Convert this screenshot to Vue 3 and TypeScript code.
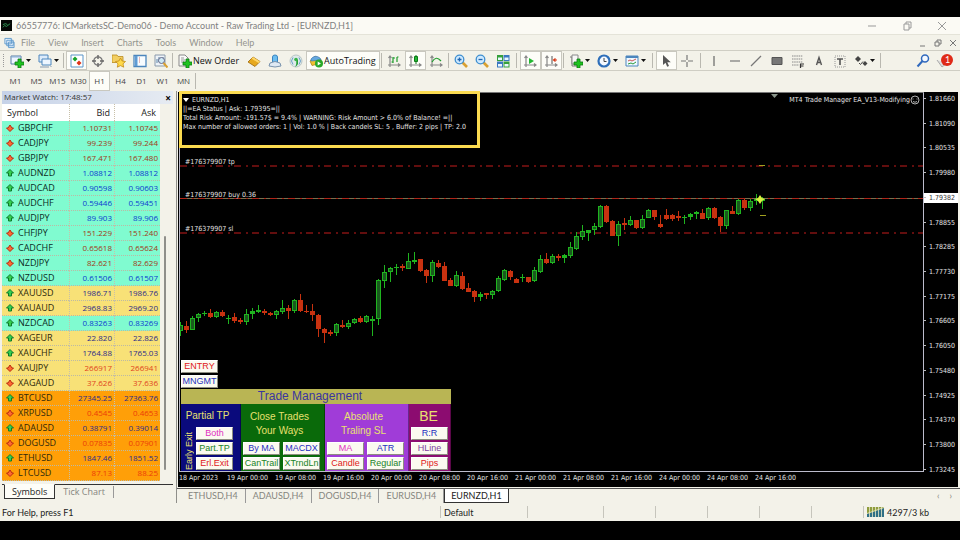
<script setup lang="ts">
interface Quote { symbol: string; bid: string; ask: string; up: boolean; group: 'mint' | 'gold' | 'orange' }
interface Tool { kind: 'btn' | 'drop' | 'sep' | 'text'; icon?: string; label?: string; active?: boolean; wide?: boolean }
type Candle = [string, number, number, number, number]

const menus = ['File', 'View', 'Insert', 'Charts', 'Tools', 'Window', 'Help']
const frames = ['M1', 'M5', 'M15', 'M30', 'H1', 'H4', 'D1', 'W1', 'MN']

const q = (row: string): Quote => {
  const [symbol, bid, ask, dir, group] = row.split(' ')
  return { symbol, bid, ask, up: dir === 'u', group: group as Quote['group'] }
}
const quotes: Quote[] = [
  'GBPCHF 1.10731 1.10745 d mint', 'CADJPY 99.239 99.244 d mint', 'GBPJPY 167.471 167.480 d mint',
  'AUDNZD 1.08812 1.08812 u mint', 'AUDCAD 0.90598 0.90603 u mint', 'AUDCHF 0.59446 0.59451 u mint',
  'AUDJPY 89.903 89.906 u mint', 'CHFJPY 151.229 151.240 d mint', 'CADCHF 0.65618 0.65624 d mint',
  'NZDJPY 82.621 82.629 d mint', 'NZDUSD 0.61506 0.61507 u mint', 'XAUUSD 1986.71 1986.76 u gold',
  'XAUAUD 2968.83 2969.20 u gold', 'NZDCAD 0.83263 0.83269 u mint', 'XAGEUR 22.820 22.826 u gold',
  'XAUCHF 1764.88 1765.03 u gold', 'XAUJPY 266917 266941 d gold', 'XAGAUD 37.626 37.636 d gold',
  'BTCUSD 27345.25 27363.76 u orange', 'XRPUSD 0.4545 0.4653 d orange', 'ADAUSD 0.38791 0.39014 u orange',
  'DOGUSD 0.07835 0.07901 d orange', 'ETHUSD 1847.46 1851.52 u orange', 'LTCUSD 87.13 88.25 d orange',
].map(q)

const plus = '<path d="M8 5h3v3h3v3h-3v3h-3v-3h-3v-3h3z" fill="#1fc31f" stroke="#0b7a12" stroke-width=".8"/>'
const axes = '<path d="M3 2v11M1 11h12M1.500 4l1.500-2 1.500 2M11 9.500l2 1.500-2 1.500" fill="none" stroke="#888" stroke-width="1.200"/>'
const mag = (sign: string) =>
  `<path d="M8.500 8.500l4.500 4.500" stroke="#d9a030" stroke-width="2.600"/><circle cx="5.500" cy="5.500" r="4.300" fill="#cfeaff" stroke="#3f8fd0" stroke-width="1.300"/><path d="${sign}" stroke="#2266b0" stroke-width="1.300"/>`
const icons: Record<string, string> = {
  newChart: '<path d="M1 2h10v8h-10z" fill="#eef6ff" stroke="#5a7fa5"/><path d="M1 3h10" stroke="#8ab0d8"/>' + plus,
  profiles: '<path d="M1 1h9v7h-9z" fill="#dcebfb" stroke="#4c86bd"/><path d="M4 5h9v6h-9z" fill="#eef6ff" stroke="#4c86bd"/><path d="M2 13h9M13 12v1" stroke="#8a9ab0"/>',
  watch: '<path d="M1 1h12v12h-12z" fill="#fff" stroke="#5b95c9"/><path d="M5 2.500l2.500 2.500-2.500 2.500-2.500-2.500z" fill="#16a32a"/><path d="M9 6.500l2.500 2.500-2.500 2.500-2.500-2.500z" fill="#e03418"/>',
  target: '<circle cx="7" cy="7" r="4.200" fill="none" stroke="#777" stroke-width="1.200"/><path d="M7 1v4M7 9v4M1 7h4M9 7h4" stroke="#666" stroke-width="1.400"/>',
  star: '<path d="M0 1h5l1 1.500h5v6h-11z" fill="#f3cf62" stroke="#b98a20" stroke-width=".8"/><path d="M8.500 4l1.600 3 3.400.5-2.500 2.300.7 3.400-3.200-1.600-3.200 1.600.7-3.400-2.500-2.300 3.400-.5z" fill="#ffd94a" stroke="#c08a18" stroke-width=".8"/>',
  nav: '<path d="M1 1.500h12v11h-12z" fill="#f8fcff" stroke="#4c86bd" stroke-width="1.300"/><path d="M2 2h2.500v10h-2.500z" fill="#5e9bd4"/><path d="M6 4h.8M6 6h.8M6 8h.8" stroke="#c55"/>',
  tester: '<path d="M1 1h10v11h-10z" fill="#eef3f8" stroke="#8a9aab"/><path d="M3 9v-4M5 8v-5M9 6v-3" stroke="#5a86a8"/><circle cx="7.500" cy="6.500" r="3" fill="#cde9f5" stroke="#668"/><path d="M9.500 9l4 4.500" stroke="#d9a030" stroke-width="2"/>',
  order: '<path d="M1 1h6l3 3v8h-9z" fill="#fafafa" stroke="#888"/><path d="M3 4h3M3 6h4M3 8h3" stroke="#999"/>' + plus,
  gold: '<path d="M1 8l5-5 7 4.500-5 5z" fill="#e7a91e" stroke="#9a6608" stroke-width=".8"/><path d="M6 3l7 4.500-1.500 1.500-7-4.500z" fill="#ffd768"/>',
  hat: '<path d="M4.500 3q0-2 2.500-2t2.500 2v5h-5z" fill="#6cbdf0" stroke="#3a84c0"/><path d="M2 9q5-3 10 0l1 3q-6 2-12 0z" fill="#dfe9f3" stroke="#7a93ad"/>',
  signal: '<circle cx="7" cy="7" r="6" fill="#dfeaea" stroke="#b9c5c5"/><path d="M4 3.500q-3 3.500 0 7M10 3.500q3 3.500 0 7" fill="none" stroke="#6aa0c8"/><path d="M7 5l2 1v4q-1 2-3 3q2-3 1-8z" fill="#25a035"/><circle cx="7" cy="5.500" r="1.800" fill="#38b548"/>',
  auto: '<path d="M1 7l5-4.500 6 3-1 4-8 2z" fill="#f0c030" stroke="#a47a12" stroke-width=".7"/><path d="M2 5q4-5 9-1l1 2-10 1z" fill="#64a8e0" stroke="#3d76ad" stroke-width=".7"/><circle cx="10" cy="9.500" r="4" fill="#2aa82a"/><path d="M8.700 7.500v4l3.200-2z" fill="#fff"/>',
  bars: axes + '<path d="M6 9v-6M6 8h-1.500M6 4h2M10 8v-5M10 3h1.500" stroke="#1f9c2c" stroke-width="1.200" fill="none"/>',
  candle: axes + '<path d="M8 1v9" stroke="#0d7a18"/><path d="M6.500 2.500h3v5h-3z" fill="#22b832" stroke="#0d7a18"/>',
  line: axes + '<path d="M3 8q4-7 9-1" stroke="#1f9c2c" stroke-width="1.200" fill="none"/>',
  zoomIn: mag('M3.500 5.500h4M5.500 3.500v4'),
  zoomOut: mag('M3.500 5.500h4'),
  tile: '<path d="M1 1h6v6h-6z" fill="#35a03c"/><path d="M7.500 1h6v6h-6z" fill="#3a78c0"/><path d="M1 7.500h6v6h-6z" fill="#3a78c0"/><path d="M7.500 7.500h6v6h-6z" fill="#35a03c"/><path d="M2 3.500h4v2.500h-4zM8.500 3.500h4v2.500h-4zM2 10h4v2.500h-4zM8.500 10h4v2.500h-4z" fill="#e9f6ff"/>',
  scroll: axes + '<path d="M6 4v6l5-3z" fill="#22b832"/>',
  shift: axes + '<path d="M8 2v8" stroke="#555"/><path d="M13 6h-3M11.500 4.500l-2 1.500 2 1.500" stroke="#d83a18" stroke-width="1.200" fill="none"/>',
  indicator: '<path d="M1 3h2v9h5" fill="none" stroke="#777"/><path d="M3 1h6v9h-6z" fill="#f6f6f6" stroke="#888"/>' + plus,
  clock: '<circle cx="7" cy="7" r="5.500" fill="#f4f9ff" stroke="#2e6fba" stroke-width="2.200"/><path d="M7 4v3.500h2.500" fill="none" stroke="#444"/>',
  template: '<path d="M1 2h12v10h-12z" fill="#eef8ff" stroke="#4c86bd"/><path d="M1 3h12" stroke="#4c86bd" stroke-width="2"/><path d="M3 7l2-1 2 1 4-2" stroke="#c55" fill="none"/><path d="M3 10l3-1 2 1 3-2" stroke="#2a9a3a" fill="none"/>',
  cursor: '<path d="M4 1v10l2.500-2.300 1.700 4 1.800-.8-1.700-3.700h3.500z" fill="#555"/>',
  cross: '<path d="M7 1v5M7 8v5M1 7h5M8 7h5" stroke="#777" stroke-width="1.200"/>',
  vline: '<path d="M7 2v10" stroke="#666" stroke-width="1.200"/>',
  hline: '<path d="M2 7h10" stroke="#777" stroke-width="1.200"/>',
  trend: '<path d="M2 12l10-10" stroke="#777" stroke-width="1.200"/>',
  rect: '<path d="M2 3.500h10v7h-10z" fill="#777" stroke="#555"/>',
  fibo: '<path d="M1 2h11M1 5h11M1 8h11M1 11h7" stroke="#888" stroke-dasharray="1.500 .7"/><path d="M9 10h4M9.500 10v4M9.500 12h3" stroke="#333" stroke-width="1.200"/>',
  text: '<path d="M4.500 11l2.500-7.500 2.500 7.500M5 8.500h4" fill="none" stroke="#555" stroke-width="1.400"/>',
  label: '<path d="M2 2h10v11h-10z" fill="none" stroke="#999" stroke-dasharray="1 1"/><path d="M4 5h6M7 5v6" stroke="#555" stroke-width="1.600"/>',
  arrows: '<path d="M4 2l3 3-3 3-3-3z" fill="#444"/><path d="M5 9l1.500 1.500 2.500-3" fill="none" stroke="#444"/><path d="M11 7l2.500 2.500-2.500 2.500-2.500-2.500z" fill="#444"/>',
  find: '<circle cx="9" cy="4.500" r="3.500" fill="#f3f8ff" stroke="#2f68bd" stroke-width="1.500"/><path d="M6.500 7l-5 5.500" stroke="#2f68bd" stroke-width="2"/>',
}

const tools: Tool[] = [
  { kind: 'drop', icon: 'newChart', label: 'New chart' }, { kind: 'drop', icon: 'profiles', label: 'Profiles' }, { kind: 'sep' },
  { kind: 'btn', icon: 'watch', label: 'Market Watch', active: true }, { kind: 'btn', icon: 'target', label: 'Data Window' },
  { kind: 'btn', icon: 'star', label: 'Navigator' }, { kind: 'btn', icon: 'nav', label: 'Terminal' }, { kind: 'btn', icon: 'tester', label: 'Strategy Tester' }, { kind: 'sep' },
  { kind: 'text', icon: 'order', label: 'New Order' }, { kind: 'btn', icon: 'gold', label: 'MetaEditor' },
  { kind: 'btn', icon: 'hat', label: 'Community' }, { kind: 'btn', icon: 'signal', label: 'Signals' },
  { kind: 'text', icon: 'auto', label: 'AutoTrading', active: true }, { kind: 'sep' },
  { kind: 'btn', icon: 'bars', label: 'Bar chart' }, { kind: 'btn', icon: 'candle', label: 'Candlesticks', active: true }, { kind: 'btn', icon: 'line', label: 'Line chart' }, { kind: 'sep' },
  { kind: 'btn', icon: 'zoomIn', label: 'Zoom in' }, { kind: 'btn', icon: 'zoomOut', label: 'Zoom out' }, { kind: 'btn', icon: 'tile', label: 'Tile windows' }, { kind: 'sep', wide: true },
  { kind: 'btn', icon: 'scroll', label: 'Auto scroll', active: true }, { kind: 'btn', icon: 'shift', label: 'Chart shift', active: true }, { kind: 'sep' },
  { kind: 'drop', icon: 'indicator', label: 'Indicators' }, { kind: 'drop', icon: 'clock', label: 'Periods' }, { kind: 'drop', icon: 'template', label: 'Templates' }, { kind: 'sep', wide: true },
  { kind: 'btn', icon: 'cursor', label: 'Cursor', active: true }, { kind: 'btn', icon: 'cross', label: 'Crosshair' }, { kind: 'sep', wide: true },
  { kind: 'btn', icon: 'vline', label: 'Vertical line' }, { kind: 'btn', icon: 'hline', label: 'Horizontal line' }, { kind: 'btn', icon: 'trend', label: 'Trendline' },
  { kind: 'btn', icon: 'rect', label: 'Rectangle' }, { kind: 'btn', icon: 'fibo', label: 'Fibonacci' }, { kind: 'btn', icon: 'text', label: 'Text' }, { kind: 'btn', icon: 'label', label: 'Text label' },
  { kind: 'drop', icon: 'arrows', label: 'Arrows' }, { kind: 'sep' },
]

const prices = ['1.81660', '1.81090', '1.80535', '1.79980', '1.79382', '1.78855', '1.78285', '1.77730', '1.77175', '1.76605', '1.76050', '1.75480', '1.74925', '1.74370', '1.73800', '1.73245']
const times = ['18 Apr 2023', '19 Apr 00:00', '19 Apr 08:00', '19 Apr 16:00', '20 Apr 00:00', '20 Apr 08:00', '20 Apr 16:00', '21 Apr 00:00', '21 Apr 08:00', '21 Apr 16:00', '24 Apr 00:00', '24 Apr 08:00', '24 Apr 16:00']
const levels = [
  { name: '#176379907 tp', y: 166 },
  { name: '#176379907 sl', y: 233 },
]

// direction, high, body top, body bottom, low
const candles: Candle[] = [
  ['g', 322, 325, 331, 336], ['r', 321, 326, 330, 333], ['g', 316, 318, 330, 330], ['g', 313, 314, 318, 322], ['g', 311, 313, 314, 316],
  ['r', 309, 313, 317, 318], ['g', 311, 312, 317, 318], ['r', 310, 312, 316, 317], ['g', 315, 318, 319, 324], ['r', 313, 317, 321, 323],
  ['r', 318, 320, 322, 324], ['g', 309, 314, 322, 325], ['g', 308, 311, 314, 319], ['g', 305, 310, 312, 313], ['r', 309, 311, 313, 315],
  ['r', 312, 313, 315, 316], ['g', 310, 311, 315, 319], ['g', 300, 308, 312, 314], ['r', 305, 308, 311, 319], ['g', 299, 300, 311, 313],
  ['r', 294, 300, 311, 312], ['r', 305, 311, 312, 313], ['r', 304, 311, 315, 321], ['r', 314, 315, 329, 337], ['r', 328, 329, 333, 343],
  ['r', 330, 332, 334, 336], ['g', 323, 324, 333, 336], ['r', 320, 325, 327, 328], ['g', 320, 323, 327, 329], ['g', 318, 319, 323, 324],
  ['r', 316, 318, 322, 323], ['g', 315, 316, 322, 323], ['g', 316, 319, 321, 336], ['g', 279, 280, 319, 325], ['g', 265, 272, 281, 288],
  ['g', 267, 268, 272, 282], ['g', 264, 267, 268, 275], ['r', 264, 266, 268, 271], ['g', 253, 261, 269, 269], ['g', 252, 260, 262, 264],
  ['r', 259, 259, 271, 272], ['r', 269, 270, 276, 283], ['g', 260, 262, 276, 282], ['r', 260, 263, 267, 268], ['r', 262, 266, 281, 281],
  ['r', 278, 280, 286, 286], ['g', 271, 275, 286, 287], ['r', 272, 276, 289, 290], ['r', 283, 288, 292, 292], ['r', 290, 291, 297, 302],
  ['g', 292, 294, 297, 301], ['r', 293, 293, 295, 299], ['g', 290, 291, 295, 299], ['g', 276, 278, 291, 292], ['g', 269, 270, 280, 281],
  ['r', 270, 271, 277, 280], ['r', 278, 279, 283, 283], ['g', 274, 277, 278, 282], ['r', 277, 277, 282, 283], ['g', 267, 270, 281, 282],
  ['g', 255, 259, 272, 273], ['r', 253, 259, 263, 264], ['g', 254, 256, 263, 264], ['r', 254, 256, 258, 261], ['g', 254, 255, 258, 263],
  ['g', 242, 247, 256, 258], ['g', 232, 236, 249, 250], ['g', 225, 231, 237, 240], ['g', 230, 230, 233, 241], ['g', 223, 226, 230, 235],
  ['g', 205, 206, 227, 228], ['r', 205, 206, 222, 223], ['r', 220, 221, 236, 236], ['g', 221, 224, 236, 246], ['r', 218, 223, 225, 230],
  ['g', 216, 220, 225, 226], ['r', 220, 220, 228, 229], ['g', 215, 219, 228, 229], ['g', 209, 210, 218, 218], ['r', 210, 210, 217, 220],
  ['r', 215, 224, 227, 228], ['r', 209, 215, 219, 220], ['r', 214, 215, 219, 221], ['r', 211, 216, 218, 221], ['g', 215, 217, 218, 224],
  ['g', 213, 214, 217, 220], ['g', 211, 212, 214, 219], ['r', 209, 213, 219, 219], ['g', 207, 208, 218, 220], ['r', 207, 208, 218, 219],
  ['r', 216, 217, 226, 232], ['g', 210, 210, 226, 229], ['r', 206, 211, 214, 214], ['g', 199, 200, 214, 215], ['r', 199, 200, 208, 210],
  ['g', 199, 201, 208, 211], ['g', 194, 199, 201, 205], ['g', 197, 199, 201, 209],
]

const panels = [
  { id: 'partial', title: ['Partial TP'], buttons: [['Both', 'pink'], ['Part.TP', 'green'], ['Erl.Exit', 'red']] },
  { id: 'close', title: ['Close Trades', 'Your Ways'], buttons: [['By MA', 'blue'], ['MACDX', 'blue'], ['CanTrail', 'green'], ['XTrndLn', 'green']] },
  { id: 'absolute', title: ['Absolute', 'Traling SL'], buttons: [['MA', 'pink'], ['ATR', 'blue'], ['Candle', 'red'], ['Regular', 'green']] },
  { id: 'be', title: ['BE'], buttons: [['R:R', 'blue'], ['HLine', 'violet'], ['Pips', 'red']] },
]
const chartTabs = ['ETHUSD,H4', 'ADAUSD,H4', 'DOGUSD,H4', 'EURUSD,H4', 'EURNZD,H1']
</script>

<template>
  <div class="desk">
    <header class="title">
      <svg class="applogo" viewBox="0 0 12 12"><path d="M0 0h12v12h-12z" fill="#050805" /><path d="M2 8l2-2 2 1 4-3M2 5l3-1 2 1" stroke="#2f9c55" fill="none" /></svg>
      <span class="caption">66557776: ICMarketsSC-Demo06 - Demo Account - Raw Trading Ltd - [EURNZD,H1]</span>
      <div class="winbtns">
        <button aria-label="Minimize"><svg viewBox="0 0 10 10"><path d="M1 5h8" /></svg></button>
        <button aria-label="Restore"><svg viewBox="0 0 10 10"><path d="M2 3h5v6h-5zM4 3v-2h5v6h-2" /></svg></button>
        <button aria-label="Close"><svg viewBox="0 0 10 10"><path d="M1 1l8 8M9 1l-8 8" /></svg></button>
      </div>
    </header>

    <nav class="menu">
      <svg class="menulogo" viewBox="0 0 12 12"><path d="M1 1h7v6h-7zM3 3h7v6h-7zM5 5h6v6h-6z" fill="#e8f3ff" stroke="#5b97c9" /></svg>
      <button v-for="m in menus" :key="m">{{ m }}</button>
      <div class="mdi">
        <button aria-label="Minimize chart"><svg viewBox="0 0 8 8"><path d="M1 7h5" /></svg></button>
        <button aria-label="Restore chart"><svg viewBox="0 0 8 8"><path d="M1 3h4v4h-4zM3 3v-2h4v4h-2" /></svg></button>
        <button aria-label="Close chart"><svg viewBox="0 0 8 8"><path d="M1 1l6 6M7 1l-6 6" /></svg></button>
      </div>
    </nav>

    <div class="tools">
      <span class="grip"></span>
      <template v-for="(t, i) in tools" :key="i">
        <span v-if="t.kind === 'sep'" :class="['sep', { wide: t.wide }]"></span>
        <button v-else :class="['tool', t.kind, { active: t.active }]" :aria-label="t.label">
          <svg class="ico" viewBox="0 0 14 14" v-html="icons[t.icon!]"></svg>
          <span v-if="t.kind === 'text'">{{ t.label }}</span>
          <svg v-if="t.kind === 'drop'" class="caret" viewBox="0 0 5 3"><path d="M0 0h5l-2.500 3z" /></svg>
        </button>
      </template>
      <span class="fill"></span>
      <button class="tool btn" aria-label="Search"><svg class="ico" viewBox="0 0 14 14" v-html="icons.find"></svg></button>
      <button class="tool alert" aria-label="Notifications">
        <svg viewBox="0 0 18 16"><path d="M1 7l5 7 5-4" fill="#ddd" stroke="#aaa" /><circle cx="11" cy="7" r="6" fill="#df2a18" /></svg>
        <span class="count">1</span>
      </button>
    </div>

    <div class="frames">
      <button v-for="f in frames" :key="f" :class="{ on: f === 'H1' }">{{ f }}</button>
      <span class="sep"></span>
    </div>

    <main class="work">
      <aside class="watch">
        <div class="whead"><span>Market Watch: 17:48:57</span><button aria-label="Close panel">×</button></div>
        <div class="wbody">
          <table>
            <thead><tr><th class="s">Symbol</th><th>Bid</th><th>Ask</th></tr></thead>
            <tbody>
              <tr v-for="r in quotes" :key="r.symbol" :class="[r.group, r.up ? 'up' : 'down']">
                <td class="s">
                  <svg class="dir" viewBox="0 0 8 8">
                    <path v-if="r.up" d="M4 .5l3.500 3.500h-2v3h-3v-3h-2z" fill="#35cf50" stroke="#0d7a2a" />
                    <path v-else d="M4 7.500l3.500-3.500h-1.500l-2-3-2 3h-1.500z" fill="#ff6a30" stroke="#b82a10" />
                  </svg>{{ r.symbol }}
                </td>
                <td>{{ r.bid }}</td>
                <td>{{ r.ask }}</td>
              </tr>
            </tbody>
          </table>
          <div class="bar"><span class="thumb"></span></div>
        </div>
        <div class="wtabs"><button class="on">Symbols</button><button>Tick Chart</button></div>
      </aside>

      <section class="charts">
        <div class="chart">
          <div class="view">
            <svg class="plot" viewBox="180 93 743 378" preserveAspectRatio="none">
              <path v-for="l in levels" :key="l.name" :d="`M180 ${l.y}H923`" class="stop" />
              <path d="M180 198.500H923" class="entry" />
              <path d="M180 198.500H923" class="entrydash" />
              <text v-for="l in levels" :key="l.name" x="185" :y="l.y - 2">{{ l.name }}</text>
              <text x="185" y="197">#176379907 buy 0.36</text>
              <g v-for="(c, i) in candles" :key="i" :class="c[0]" shape-rendering="crispEdges">
                <rect :x="180 + i * 6" :y="c[1]" width="1" :height="c[4] - c[1]" />
                <rect :x="178 + i * 6" :y="c[2]" width="5" :height="Math.max(1, c[3] - c[2])" />
                <rect v-if="c[0] === 'g' && c[3] - c[2] > 3" class="core" :x="179 + i * 6" :y="c[2] + 1" width="3" :height="c[3] - c[2] - 2" />
              </g>
              <path d="M759 165.500h6M760 215.500h6" stroke="#a0a020" />
              <path d="M760 195l2 3 3 1-3 2-2 3-2-3-3-2 3-1z" fill="#d8f040" />
              <path d="M771 94h7l-3.500 4z" fill="#8b968b" />
            </svg>
            <div class="info">
              <p><svg class="tri" viewBox="0 0 6 4"><path d="M0 0h6l-3 4z" /></svg>EURNZD,H1</p>
              <p>||=EA Status | Ask: 1.79395=||</p>
              <p>Total Risk Amount: -191.57$ = 9.4% | WARNING: Risk Amount &gt; 6.0% of Balance! =||</p>
              <p>Max number of allowed orders: 1 | Vol: 1.0 % | Back candels SL: 5 , Buffer: 2 pips | TP: 2.0</p>
            </div>
            <div class="expert">MT4 Trade Manager EA_V13-Modifying<svg viewBox="0 0 10 10"><circle cx="5" cy="5" r="4" /><path d="M3 3.500v1M7 3.500v1M3 6.500q2 1.500 4 0" /></svg></div>
            <div class="ea">
              <div class="modes">
                <button class="red">ENTRY</button>
                <button class="blue">MNGMT</button>
              </div>
              <h2>Trade Management</h2>
              <div class="cols">
                <div v-for="p in panels" :key="p.id" :class="['col', p.id]">
                  <h3><span v-for="t in p.title" :key="t">{{ t }}</span></h3>
                  <div class="row">
                    <span v-if="p.id === 'partial'" class="early">Early Exit</span>
                    <div class="keys"><button v-for="b in p.buttons" :key="b[0]" :class="b[1]">{{ b[0] }}</button></div>
                  </div>
                </div>
              </div>
            </div>
          </div>
          <div class="prices"><span v-for="p in prices" :key="p" :class="{ now: p === '1.79382' }">{{ p }}</span></div>
          <div class="times"><span v-for="t in times" :key="t">{{ t }}</span></div>
        </div>
        <div class="ctabs">
          <button v-for="t in chartTabs" :key="t" :class="{ on: t === 'EURNZD,H1' }">{{ t }}</button>
          <span class="nav"><button aria-label="Previous tabs">‹</button><button aria-label="Next tabs">›</button></span>
        </div>
      </section>
    </main>

    <footer class="status">
      <span class="help">For Help, press F1</span>
      <span class="c1">Default</span><span class="c2"></span><span class="c3"></span><span class="c3"></span><span class="c3"></span><span class="c3"></span><span class="c3"></span>
      <span class="net">
        <svg viewBox="0 0 17 10"><path d="M0 0h17v10h-17z" fill="#8f9c3c" /><path d="M0 10v-3l17-6v9z" fill="#2f6f86" /><path d="M2.500 0v10M5.500 0v10M8.500 0v10M11.500 0v10M14.500 0v10M0 6.500l17-6" stroke="#e8e8c8" stroke-width=".8" /></svg>
        4297/3 kb
      </span>
    </footer>
  </div>
</template>

<style>
body { background: #000; }
</style>

<style scoped>
* { box-sizing: border-box; }
button { font: inherit; color: inherit; background: none; border: 0; padding: 0; margin: 0; white-space: nowrap; }
.desk {
  min-height: 100vh; padding: 17px 0 19px; display: flex; flex-direction: column;
  background: #000; color: #222; font: 9px/12px Lato, "Open Sans", sans-serif;
}
.desk > * { background: #f3f2e9; }
.title { display: flex; align-items: center; height: 18px; padding: 0 13px 0 1px; background: #fbfaf4; color: #808080; gap: 4px; border-bottom: 1px solid #e4e3d8; }
.applogo { width: 11px; height: 11px; }
.caption { flex: 1; white-space: nowrap; }
.winbtns { display: flex; gap: 25px; }
.winbtns svg { display: block; width: 10px; height: 10px; fill: none; stroke: #999; }
.menu { display: flex; align-items: center; height: 15px; padding: 0 3px 0 4px; gap: 13px; color: #94948e; }
.menulogo { width: 11px; height: 12px; margin-right: -7px; }
.mdi { display: flex; gap: 7px; margin-left: auto; }
.mdi svg { display: block; width: 8px; height: 8px; fill: none; stroke: #777; }
.tools { display: flex; align-items: stretch; height: 21px; padding: 0 3px 0 1px; border-top: 1px solid #cfcec4; border-bottom: 1px solid #cfcec4; }
.grip { width: 2px; margin: 3px 1px 3px 2px; border-left: 1px dotted #999; }
.sep { width: 1px; margin: 2px 2px 2px 1px; background: #b9b8b0; }
.sep.wide { margin-left: 2px; margin-right: 3px; }
.tool { display: flex; align-items: center; justify-content: center; width: 21px; height: 19px; border: 1px solid transparent; color: #111; }
.tool.active { background: #fdfdf8; border-color: #c9c8bf; }
.tool.drop { width: 28px; gap: 2px; }
.tool.text { width: auto; padding: 0 3px 0 2px; gap: 1px; font-family: "Open Sans", sans-serif; }
.ico { width: 14px; height: 14px; flex: none; }
.caret { width: 5px; height: 3px; fill: #111; }
.fill { flex: 1; }
.alert { position: relative; width: 24px; }
.alert svg { width: 18px; height: 16px; }
.count { position: absolute; left: 11px; top: 2px; color: #fff; }
.frames { display: flex; align-items: stretch; height: 20px; padding: 0 0 0 5px; font: 8px/12px "Open Sans", sans-serif; color: #444; }
.frames button { width: 21px; border: 1px solid transparent; }
.frames .on { background: #fdfdf8; border-color: #c9c8bf; }
.work { flex: 1; display: flex; align-items: stretch; }
.watch { width: 177px; flex: none; padding: 0 3px 4px 2px; border-right: 1px solid #8f8f8a; font-family: "Open Sans", sans-serif; }
.whead { display: flex; justify-content: space-between; height: 13px; padding: 0 2px; background: linear-gradient(90deg, #c6d2e8, #e6ebf2); color: #333; font-size: 8px; }
.whead button { color: #000; font-size: 10px; font-weight: 700; }
.wbody { display: flex; gap: 4px; }
table { width: 158px; border-spacing: 0; table-layout: fixed; background: #fff; }
th { height: 17px; padding: 0 4px 0 0; text-align: right; font-weight: 400; }
th.s { width: 67px; text-align: left; padding-left: 5px; }
th:last-child, td:last-child { width: 46px; }
th + th, td + td { border-left: 1px dotted #c8c0a8; }
td { height: 15px; padding: 0 2px 0 0; line-height: 14px; font-size: 8px; text-align: right; border-bottom: 1px dotted #bcb9a4; }
td.s { text-align: left; font-size: 9px; padding-left: 4px; color: #0c2c24; white-space: nowrap; }
.dir { width: 8px; height: 8px; margin-right: 4px; vertical-align: -1px; }
.mint { background: #80fbd0; }
.gold { background: #f8e177; }
.orange { background: #ff9f08; }
.up { color: #0c3cd0; }
.down { color: #a03818; }
.gold.up, .orange.up { color: #2c2c88; }
.gold.down { color: #e04420; }
.orange.down { color: #ec3c08; }
.gold td.s, .orange td.s { color: #302a0c; }
.bar { width: 6px; display: flex; flex-direction: column; justify-content: flex-end; padding-bottom: 11px; }
.thumb { width: 2px; height: 64%; background: #8f8f8a; border-radius: 1px; }
.wtabs { display: flex; height: 15px; margin: 3px 0 0; border-top: 1px solid #333; }
.wtabs button { padding: 0 8px; color: #85857e; border-right: 1px solid #999; margin: 1px 0; }
.wtabs .on { margin: -1px 0 0 2px; padding: 0 7px; background: #fdfdf8; color: #222; border: 1px solid #333; border-top-color: #fdfdf8; }
.charts { flex: 1; min-width: 0; display: flex; flex-direction: column; }
.chart { flex: 1; display: grid; grid-template-columns: 1fr 34px; grid-template-rows: 1fr 15px; background: #000; margin: 1px 2px 0 1px; padding-left: 1px; color: #e4e4e4; font: 7px/10px "DejaVu Sans Condensed", "DejaVu Sans", sans-serif; }
.view { position: relative; border: 1px solid #bcbccc; border-top-color: #777; }
.plot { position: absolute; inset: 0; width: 100%; height: 100%; }
.plot text { fill: #e0e0e0; font-size: 7px; }
.stop { stroke: #c41c1c; stroke-dasharray: 7 5 2 4; }
.entry { stroke: #77704c; }
.entrydash { stroke: #b02418; stroke-dasharray: 7 5 2 4; }
.g { fill: #1fb41f; }
.r { fill: #c83210; }
.core { fill: #1a5a1e; }
.info { position: absolute; left: -1px; top: -2px; width: 301px; height: 57px; border: 3px solid #fbdb50; padding: 2px 1px; }
.info p { margin: 0; font-size: 7px; line-height: 9px; white-space: nowrap; }
.tri { width: 6px; height: 4px; margin-right: 3px; fill: #fff; }
.expert { position: absolute; right: 3px; top: 2px; display: flex; align-items: center; }
.expert svg { width: 10px; height: 10px; fill: none; stroke: #ddd; stroke-width: .8; }
.ea { position: absolute; left: 1px; bottom: 0; font: 9px/12px "Liberation Sans", Arial, sans-serif; }
.ea button { display: block; width: 37px; height: 13px; background: #fbfaf0; border: 1px solid; border-color: #fff #8d8d80 #8d8d80 #fff; line-height: 11px; }
.modes { display: grid; gap: 2px; margin-bottom: 1px; }
h2 { margin: 0; height: 15px; background: #b9b554; color: #3a36a0; font-size: 12px; font-weight: 400; line-height: 15px; text-align: center; padding-right: 12px; }
.cols { display: grid; grid-template-columns: 60px 84px 84px 42px; height: 67px; }
.col { display: flex; flex-direction: column; justify-content: space-between; padding: 6px 0 1px 2px; border-right: 1px solid rgba(0, 0, 0, .35); }
.row { display: flex; align-items: flex-end; }
.keys { display: grid; grid-template-columns: 37px 37px; gap: 2px 3px; }
.partial .keys, .be .keys { grid-template-columns: 37px; }
.partial { background: #0a0a7c; }
.close { background: #0a6a0a; }
.absolute { background: #a03cd8; }
.be { background: #8c0c70; }
h3 { margin: 0; display: flex; flex-direction: column; font-size: 10px; line-height: 14px; font-weight: 400; text-align: center; color: #e8e070; padding-right: 8px; }
.partial h3, .be h3 { height: 0; line-height: 12px; }
.be h3 { font-size: 14px; padding-right: 4px; }
.early { width: 13px; writing-mode: vertical-rl; transform: rotate(180deg); color: #e8e070; line-height: 13px; white-space: nowrap; }
.ea .red { color: #e02020; }
.ea .blue { color: #2430c0; }
.ea .green { color: #208428; }
.ea .pink { color: #e030c0; }
.ea .violet { color: #8040a0; }
.prices { display: flex; flex-direction: column; justify-content: space-between; padding: 2px 0 0; margin-bottom: -3px; }
.prices span { padding-left: 5px; position: relative; white-space: nowrap; }
.prices span::before { content: ""; position: absolute; left: 0; top: 4px; width: 2px; height: 1px; background: #bbb; }
.prices .now { background: #fff; color: #333; }
.times { grid-column: 1 / 3; display: grid; grid-auto-flow: column; grid-auto-columns: 48px; justify-content: start; line-height: 13px; white-space: nowrap; }
.ctabs { display: flex; align-items: stretch; height: 15px; padding-left: 4px; margin-top: 1px; border-top: 1px solid #555; color: #85857e; }
.ctabs > button { padding: 0 7px; border-right: 1px solid #999; }
.ctabs > .on { background: #fff; color: #222; border: 1px solid #333; border-top: 0; padding: 0 6px; }
.nav { margin-left: auto; display: flex; gap: 10px; padding-right: 8px; }
.status { display: flex; align-items: stretch; height: 18px; white-space: nowrap; }
.status span { border-left: 1px solid #c6c5bc; padding-left: 3px; margin: 3px 0; line-height: 13px; flex: 0 1 52px; }
.status .help { flex: 1 1 auto; border: 0; padding-left: 2px; }
.status .c1 { flex-basis: 87px; }
.status .c2 { flex-basis: 76px; }
.status .net { flex: 0 0 97px; display: flex; gap: 3px; align-items: center; }
.net svg { width: 17px; height: 10px; }
</style>
